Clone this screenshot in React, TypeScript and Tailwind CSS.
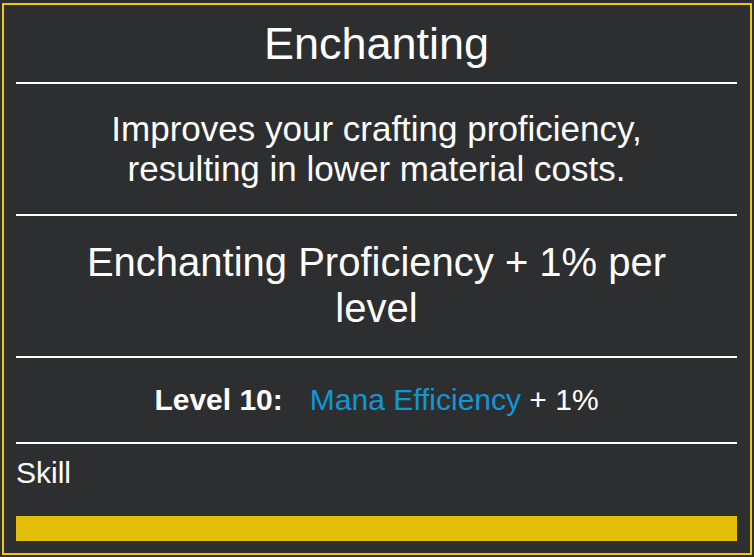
export default function App() {
  return (
    <div
      className="min-h-[557px] w-[754px] bg-[#2d2e30] pl-[2px] pt-[3px] text-white"
      style={{ fontFamily: '"Liberation Sans", Arial, sans-serif' }}
    >
      <div className="flex h-[552px] w-[750px] flex-col border-2 border-[#f2c80f] pl-[12px] pr-[13px]">
        {/* Title */}
        <div className="pt-[13px] pb-[13px] text-center text-[45px] leading-[51px]">Enchanting</div>
        <div className="h-[2px] bg-white" />

        {/* Description */}
        <div className="px-[40px] pt-[25px] pb-[25px] text-center text-[35px] leading-[40px]">
          Improves your crafting proficiency, resulting in lower material costs.
        </div>
        <div className="h-[2px] bg-white" />

        {/* Effect */}
        <div className="px-[40px] pt-[23px] pb-[25px] text-center text-[40px] leading-[46px]">
          Enchanting Proficiency + 1% per level
        </div>
        <div className="h-[2px] bg-white" />

        {/* Level bonus */}
        <div className="pt-[24px] pb-[25px] text-center text-[30px] leading-[35px]">
          <span className="font-bold">Level 10:</span>
          <span className="ml-[27px] text-[#1196d6]">Mana Efficiency</span> + 1%
        </div>
        <div className="h-[2px] bg-white" />

        {/* Skill */}
        <div className="pt-[11px] text-[30px] leading-[35px]">Skill</div>
        <div className="mt-[26px] h-[25px] bg-[#e4bf0a]" />
      </div>
    </div>
  );
}
